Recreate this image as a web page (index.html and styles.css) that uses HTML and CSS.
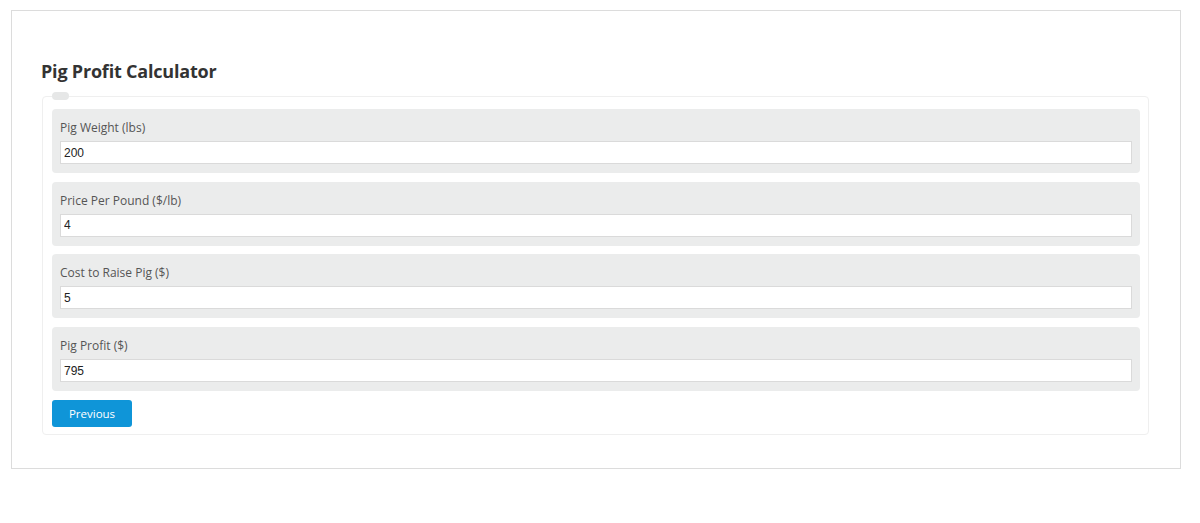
FILE: index.html
```
<!DOCTYPE html>
<html>
<head>
<meta charset="utf-8">
<link rel="stylesheet" href="styles.css">
</head>
<body>
<div class="page">
  <h2 class="title">Pig Profit Calculator</h2>
  <fieldset class="calc">
    <legend class="calc-legend"></legend>
    <div class="field">
      <label class="field-label">Pig Weight (lbs)</label>
      <input class="field-input" type="text" value="200">
    </div>
    <div class="field">
      <label class="field-label">Price Per Pound ($/lb)</label>
      <input class="field-input" type="text" value="4">
    </div>
    <div class="field">
      <label class="field-label">Cost to Raise Pig ($)</label>
      <input class="field-input" type="text" value="5">
    </div>
    <div class="field">
      <label class="field-label">Pig Profit ($)</label>
      <input class="field-input" type="text" value="795">
    </div>
    <button class="btn" type="button">Previous</button>
  </fieldset>
</div>
</body>
</html>
```
FILE: styles.css
```
html, body {
  margin: 0;
  padding: 0;
  background: #fff;
}
body {
  font-family: "Open Sans", "Noto Sans", sans-serif;
  color: #333;
}
.page {
  margin: 10px 19px 0 11px;
  border: 1px solid #dcdcdc;
  padding: 49px 31px 33px 30px;
}
.title {
  margin: 0 0 10px -1px;
  font-family: "Open Sans", sans-serif;
  font-weight: 700;
  font-size: 18px;
  line-height: 22px;
  color: #333;
  letter-spacing: -0.2px;
}
.calc {
  margin: 0;
  border: 1px solid #efefef;
  border-radius: 4px;
  padding: 9px 8px 7px 9px;
  display: flex;
  flex-direction: column;
  gap: 8.7px;
}
.calc-legend {
  width: 17px;
  height: 8px;
  padding: 0;
  margin-left: 0;
  background: #e6e7e7;
  border-radius: 4px;
}
.field {
  background: #ebecec;
  border-radius: 4px;
  padding: 11px 8px 9px 8px;
  display: flex;
  flex-direction: column;
  gap: 5px;
}
.field-label {
  font-family: "Open Sans", sans-serif;
  font-size: 12px;
  line-height: 16px;
  color: #555;
}
.field-input {
  box-sizing: border-box;
  height: 23px;
  width: 100%;
  border: 1px solid #dadada;
  background: #fff;
  padding: 0 3px;
  font-family: "Liberation Sans", Arial, sans-serif;
  font-size: 12px;
  color: #222;
  margin: 0;
}
.btn {
  align-self: flex-start;
  margin-top: 0;
  width: 80px;
  height: 27px;
  border: none;
  border-radius: 3px;
  background: #0f95d8;
  color: #fff;
  font-family: "Open Sans", sans-serif;
  font-size: 11.5px;
  padding: 0;
}
```
